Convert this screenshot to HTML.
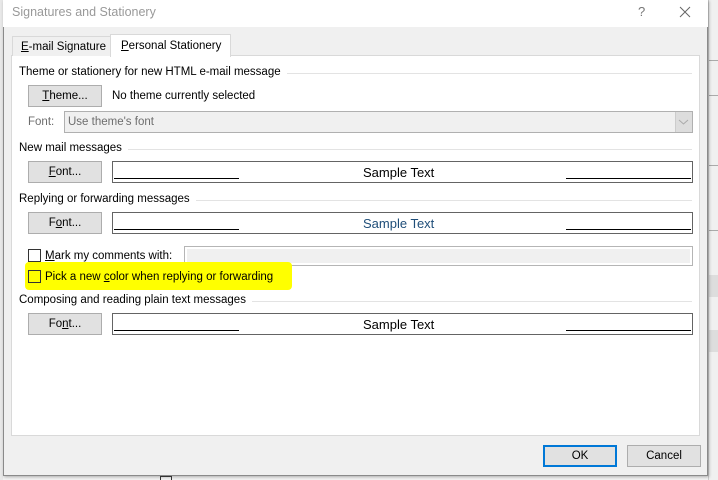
<!DOCTYPE html>
<html><head><style>
*{margin:0;padding:0;box-sizing:border-box}
body{width:718px;height:480px;overflow:hidden;background:#f3f3f3;font-family:"Liberation Sans",sans-serif;font-size:11.5px;color:#000;position:relative}
.a{position:absolute}
.btn{position:absolute;background:#e1e1e1;border:1px solid #adadad;text-align:center;line-height:21px;font-size:11.5px}
.sec{position:absolute;left:19px;right:26px;height:14px;font-size:11.5px;white-space:nowrap}
.sec span{background:#fff;padding-right:6px;position:relative;z-index:1}
.sec:after{content:"";position:absolute;left:0;right:0;top:7px;border-top:1px solid #e3e3e3}
.samp{position:absolute;left:112px;width:581px;height:22px;border:1px solid #646464;background:#fff}
.samp .l{position:absolute;left:1px;width:125px;top:16px;border-top:1px solid #000}
.samp .r{position:absolute;right:1px;width:125px;top:16px;border-top:1px solid #000}
.samp .t{position:absolute;left:250px;top:3px;font-size:13px}
.cb{position:absolute;width:13px;height:13px;border:1px solid #333;background:#fff}
u{text-decoration:underline}
</style></head><body>
<div class="a" style="left:0;top:0;width:3px;height:480px;background:#e8e8e8"></div>
<div class="a" style="left:708px;top:0;width:10px;height:480px;background:#f0f0f0;border-left:1px solid #ccc"></div>
<div class="a" style="left:709px;top:60px;width:9px;height:1px;background:#aaa"></div>
<div class="a" style="left:709px;top:95px;width:9px;height:1px;background:#aaa"></div>
<div class="a" style="left:709px;top:165px;width:9px;height:1px;background:#aaa"></div>
<div class="a" style="left:709px;top:230px;width:9px;height:1px;background:#aaa"></div>
<div class="a" style="left:709px;top:275px;width:9px;height:22px;background:#ddd"></div>
<div class="a" style="left:709px;top:330px;width:9px;height:22px;background:#ddd"></div>
<div class="a" style="left:3px;top:0;width:705px;height:476px;background:#f0f0f0;border:1px solid #8a8a8a;border-top:none;box-shadow:1px 1px 3px rgba(0,0,0,.3)"></div>
<div class="a" style="left:3px;top:0;width:705px;height:27px;background:#fff"></div>
<div class="a" style="left:12px;top:5px;font-size:12.5px;color:#999">Signatures and Stationery</div>
<div class="a" style="left:638px;top:4px;font-size:13px;color:#777">?</div>
<svg class="a" style="left:679px;top:6px" width="12" height="12"><path d="M1 1L11 11M11 1L1 11" stroke="#666" stroke-width="1"/></svg>
<div class="a" style="left:11px;top:55px;width:689px;height:381px;background:#fff;border:1px solid #d9d9d9"></div>
<div class="a" style="left:12px;top:36px;width:99px;height:20px;background:#f0f0f0;border:1px solid #d9d9d9;border-bottom:none;line-height:21px;padding-left:8px"><u>E</u>-mail Signature</div>
<div class="a" style="left:110px;top:34px;width:121px;height:23px;background:#fff;border:1px solid #d9d9d9;border-bottom:none;line-height:22px;padding-left:10px"><u>P</u>ersonal Stationery</div>
<div class="sec" style="top:66px"><span>Theme or stationery for new HTML e-mail message</span></div>
<div class="btn" style="left:28px;top:85px;width:74px;height:22px"><u>T</u>heme...</div>
<div class="a" style="left:112px;top:90px">No theme currently selected</div>
<div class="a" style="left:28px;top:116px;color:#6d6d6d">Font:</div>
<div class="a" style="left:64px;top:111px;width:629px;height:22px;background:#f0f0f0;border:1px solid #b0b0b0;color:#6d6d6d;padding-left:3px;line-height:21px">Use theme's font</div>
<div class="a" style="left:675px;top:112px;width:17px;height:20px;background:#ddd;border-left:1px solid #ccc"></div>
<svg class="a" style="left:678px;top:118px" width="11" height="8"><path d="M1 2L5.5 6L10 2" stroke="#aaa" fill="none"/></svg>
<div class="sec" style="top:142px"><span>New mail messages</span></div>
<div class="btn" style="left:28px;top:161px;width:74px;height:22px"><u>F</u>ont...</div>
<div class="samp" style="top:161px"><div class="l"></div><div class="r"></div><div class="t">Sample Text</div></div>
<div class="sec" style="top:193px"><span>Replying or forwarding messages</span></div>
<div class="btn" style="left:28px;top:212px;width:74px;height:22px">F<u>o</u>nt...</div>
<div class="samp" style="top:212px"><div class="l"></div><div class="r"></div><div class="t" style="color:#1f4e79">Sample Text</div></div>
<div class="cb" style="left:28px;top:249px"></div>
<div class="a" style="left:45px;top:250px"><u>M</u>ark my comments with:</div>
<div class="a" style="left:184px;top:246px;width:509px;height:20px;background:#f0f0f0;border:1px solid #b5b5b5;box-shadow:inset 0 0 0 2px #fff"></div>
<div class="a" style="left:25px;top:262px;width:267px;height:28px;background:#ffff00;border-radius:4px"></div>
<div class="cb" style="left:28px;top:270px;background:transparent"></div>
<div class="a" style="left:45px;top:271px">Pick a new <u>c</u>olor when replying or forwarding</div>
<div class="sec" style="top:294px"><span>Composing and reading plain text messages</span></div>
<div class="btn" style="left:28px;top:313px;width:74px;height:22px">Fo<u>n</u>t...</div>
<div class="samp" style="top:313px"><div class="l"></div><div class="r"></div><div class="t">Sample Text</div></div>
<div class="btn" style="left:543px;top:445px;width:74px;height:22px;border:2px solid #0078d7;line-height:18px">OK</div>
<div class="btn" style="left:627px;top:445px;width:74px;height:22px">Cancel</div>
<div class="a" style="left:160px;top:476px;width:12px;height:4px;border:1px solid #333;border-bottom:none"></div>
</body></html>
